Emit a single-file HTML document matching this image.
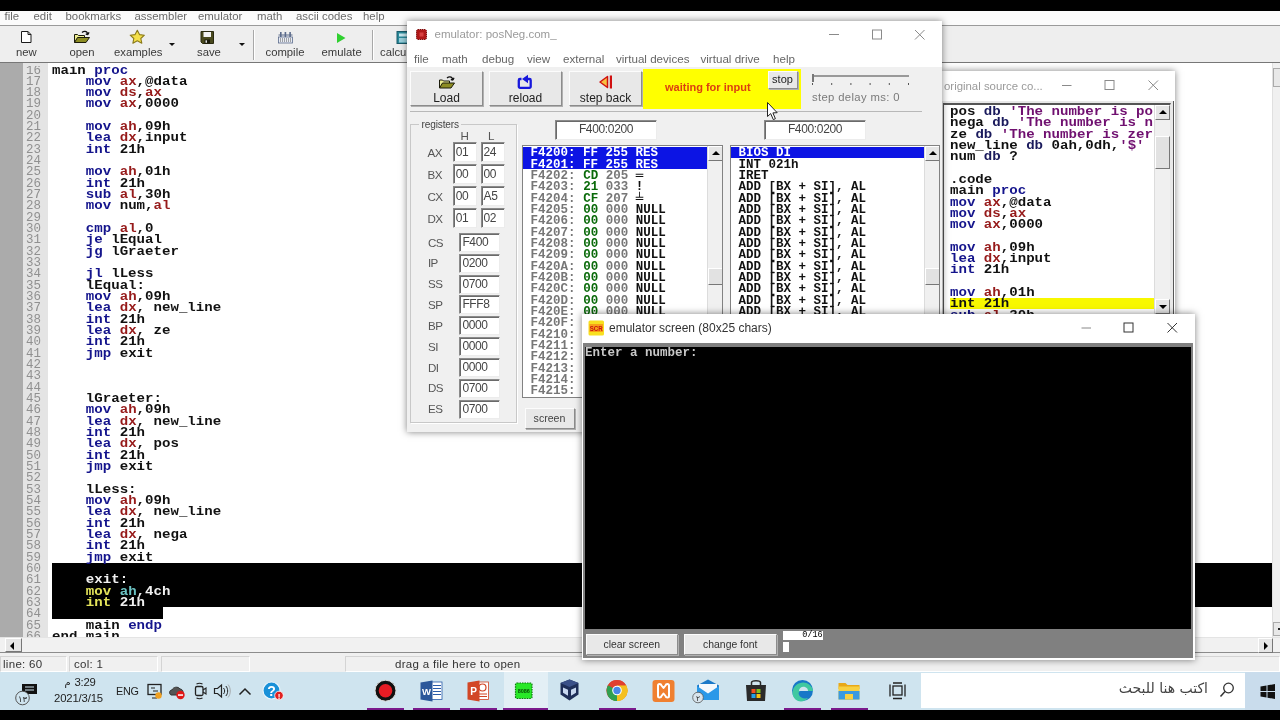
<!DOCTYPE html>
<html><head><meta charset="utf-8"><title>emu8086</title>
<style>
*{box-sizing:border-box;margin:0;padding:0}
html,body{width:1280px;height:720px;overflow:hidden;background:#fff}
body{position:relative;will-change:transform;font-family:"Liberation Sans","DejaVu Sans",sans-serif;font-size:12px;color:#222}
.abs{position:absolute}
svg{position:absolute;overflow:visible}
.mono{font-family:"Liberation Mono","DejaVu Sans Mono",monospace;font-weight:bold}
/* editor */
#menubar{left:0;top:10px;width:1280px;height:16px;background:#fbfbfb;border-bottom:1px solid #9a9a9a}
#menubar span{position:absolute;top:-1px;font-size:11.4px;color:#6a6a6a;line-height:14px;white-space:nowrap}
#toolbar{left:0;top:26px;width:1280px;height:37px;background:#eeeeee;border-bottom:1px solid #777}
.tbl{position:absolute;top:45px;font-size:11.3px;color:#3a3a3a;white-space:nowrap;line-height:14px}
.sep{position:absolute;top:30px;width:1px;height:30px;background:#a8a8a8;box-shadow:1px 0 0 #fff}
#gut1{left:0;top:63px;width:22.7px;height:574px;background:#ababab}
#gut2{left:22.7px;top:63px;width:25.3px;height:574px;background:#e4e4e4}
#ed{left:0;top:65.5px;width:1273px;height:571.5px;overflow:hidden}
.ln{height:11.33px;line-height:11.33px;white-space:pre;font-family:"Liberation Mono",monospace;font-weight:bold;font-size:12.1px;position:relative}
.ln .no{position:absolute;left:26.2px;top:0;color:#909090;font-weight:normal;transform:scaleX(1.03);transform-origin:0 50%}
.ln .tx{position:absolute;left:52px;top:0;color:#111;transform:scaleX(1.1653);transform-origin:0 50%}
.b{color:#14148c}.r{color:#961a1a}.p{color:#701070}.n{color:#1a1a5c}
.ln.sel .tx{color:#f0f0f0}
.ln.sel .b{color:#e4e45a}.ln.sel .r{color:#6cc4c4}
/* generic win controls */
.win{background:#fff;box-shadow:0 0 7px rgba(0,0,0,.5)}
.ttl{position:absolute;font-size:12px;color:#9a9a9a;white-space:nowrap}
.btn{position:absolute;background:#e8e8e8;border:1px solid #fcfcfc;border-right-color:#8c8c8c;border-bottom-color:#8c8c8c;box-shadow:1px 1px 0 #b0b0b0;text-align:center;color:#222;font-size:12px;white-space:nowrap}
.rl{position:absolute;font-size:11.6px;color:#555;line-height:14px;letter-spacing:-0.6px}
.rb{position:absolute;height:20px;letter-spacing:-0.35px;background:#fff;border:1px solid #8a8a8a;border-right-color:#ececec;border-bottom-color:#ececec;font-size:12px;line-height:17.5px;padding-left:2px;color:#444;box-shadow:inset 1px 1px 0 #6a6a6a}
.list{position:absolute;background:#fff;overflow:hidden;border:1px solid #828282}
.ml{height:11.33px;line-height:11.33px;white-space:pre;font-family:"Liberation Mono",monospace;font-weight:bold;font-size:12.5px;color:#111;padding-left:7.6px}
.ml i{font-style:normal;position:relative;top:1.6px}
.ml.hs{background:#0c14e4;color:#fff}
.ad{color:#777}.hx{color:#0a6a0a}
.sl{height:11.33px;line-height:11.33px;white-space:pre;font-family:"Liberation Mono",monospace;font-weight:bold;font-size:12.1px;color:#111;padding-left:6px}
.sl i{font-style:normal;display:inline-block;position:relative;top:1.9px;transform:scaleX(1.1653);transform-origin:0 50%}
.sl.yl{background:#f8f800;margin-left:5.5px;padding-left:0.5px}
.sb{position:absolute;background:#f0f0f0;border-left:1px solid #dcdcdc}
.sbb{position:absolute;left:0;width:15px;height:15px;background:#e6e6e6;border:1px solid #fff;border-right-color:#777;border-bottom-color:#777}
.sbt{position:absolute;left:0;width:15px;background:#e2e2e2;border:1px solid #fff;border-right-color:#777;border-bottom-color:#777}
.tri-u{position:absolute;left:3px;top:4px;width:0;height:0;border-left:4px solid transparent;border-right:4px solid transparent;border-bottom:4px solid #000}
.tri-d{position:absolute;left:3px;top:5px;width:0;height:0;border-left:4px solid transparent;border-right:4px solid transparent;border-top:4px solid #000}
.tri-l{position:absolute;left:4px;top:3px;width:0;height:0;border-top:4px solid transparent;border-bottom:4px solid transparent;border-right:4px solid #000}
.tri-r{position:absolute;left:5px;top:3px;width:0;height:0;border-top:4px solid transparent;border-bottom:4px solid transparent;border-left:4px solid #000}
.dd{position:absolute;width:0;height:0;border-left:3.5px solid transparent;border-right:3.5px solid transparent;border-top:3.5px solid #111}
.ul{position:absolute;top:707.5px;height:2px;background:#7a1a8c}
</style></head>
<body>
<!-- editor window -->
<div class="abs" id="menubar">
<span style="left:4.5px">file</span><span style="left:33.5px">edit</span><span style="left:65.5px">bookmarks</span><span style="left:134.5px">assembler</span><span style="left:198px">emulator</span><span style="left:257px">math</span><span style="left:296px">ascii codes</span><span style="left:363px">help</span>
</div>
<div class="abs" id="toolbar"></div>
<div class="tbl" style="left:16px">new</div>
<div class="tbl" style="left:69.5px">open</div>
<div class="tbl" style="left:114px">examples</div>
<div class="tbl" style="left:197px">save</div>
<div class="tbl" style="left:265.5px">compile</div>
<div class="tbl" style="left:321.5px">emulate</div>
<div class="tbl" style="left:380px">calculator</div>
<div class="sep" style="left:253px"></div><div class="sep" style="left:372px"></div>
<div class="dd" style="left:168.5px;top:43.3px"></div><div class="dd" style="left:238.5px;top:43.3px"></div>
<!-- toolbar icons -->
<svg style="left:0;top:0" width="420" height="64" viewBox="0 0 420 64">
<!-- new -->
<path d="M21.5,31.5h6.5l3,3v8h-9.5z" fill="#fff" stroke="#1a1a1a" stroke-width="1"/><path d="M28,31.500v3h3" fill="none" stroke="#1a1a1a" stroke-width="1"/>
<!-- open -->
<path d="M74.5,42.5v-8h3l1,1h6v2" fill="#ecec90" stroke="#1a1a0a" stroke-width="1"/><path d="M74.500,42.500l3,-5h12l-3.500,5z" fill="#8c8c22" stroke="#1a1a0a" stroke-width="1"/><path d="M82,32.500c2,-1.800 4.500,-1.300 5.500,0.500l0.500,1.500m0,0l-2.200,-0.500m2.200,0.500l1,-2.200" fill="none" stroke="#111" stroke-width="1.300"/>
<!-- star -->
<path d="M137.3,30.3l2.2,4.3 4.9,0.6 -3.6,3.3 1,4.7 -4.5,-2.4 -4.4,2.4 0.9,-4.7 -3.6,-3.3 4.9,-0.6z" fill="#f4e04a" stroke="#8a7a1a" stroke-width="1.1" stroke-linejoin="round"/>
<!-- save -->
<path d="M201,31.5h12.5v12h-11l-1.5,-1.5z" fill="#4a4a1e" stroke="#2a2a10" stroke-width="1"/><rect x="203.5" y="32" width="7.5" height="5" fill="#f4f4f4"/><rect x="204.5" y="39.5" width="5.5" height="4" fill="#1a1a0a"/><rect x="205.5" y="40.3" width="1.5" height="2.5" fill="#ddd"/>
<!-- compile -->
<g fill="#5a6a8a"><rect x="278.5" y="37" width="14" height="6" fill="#e8ecf4" stroke="#5a6a8a" stroke-width="0.8"/><rect x="280" y="32" width="1.6" height="5"/><rect x="284.6" y="32" width="1.6" height="5"/><rect x="289.3" y="32" width="1.6" height="5"/><rect x="278.5" y="34.5" width="14" height="1"/><g fill="#555"><rect x="280" y="38.5" width="1" height="1"/><rect x="282" y="38.5" width="1" height="1"/><rect x="284" y="38.5" width="1" height="1"/><rect x="286" y="38.5" width="1" height="1"/><rect x="288" y="38.5" width="1" height="1"/><rect x="290" y="38.5" width="1" height="1"/><rect x="280" y="40.5" width="1" height="1"/><rect x="282" y="40.5" width="1" height="1"/><rect x="284" y="40.5" width="1" height="1"/><rect x="286" y="40.5" width="1" height="1"/><rect x="288" y="40.5" width="1" height="1"/><rect x="290" y="40.5" width="1" height="1"/></g></g>
<!-- emulate -->
<path d="M337,33v10l8.5,-5z" fill="#30d030"/>
<!-- calc -->
<rect x="397" y="31.5" width="12" height="12" fill="#2a8a9a" stroke="#1a5a6a" stroke-width="1"/><rect x="399" y="33.5" width="9" height="3" fill="#c8e8f0"/><rect x="399" y="38" width="9" height="4.5" fill="#9ad0dc"/>
</svg>

<div class="abs" id="gut1"></div><div class="abs" id="gut2"></div>
<div class="abs" style="left:52px;top:562.8px;width:1221px;height:44.6px;background:#000"></div>
<div class="abs" style="left:52px;top:607px;width:111px;height:11.5px;background:#000"></div>
<div class="abs" id="ed">
<div class="ln"><span class="no">16</span><span class="tx">main <span class="b">proc</span></span></div>
<div class="ln"><span class="no">17</span><span class="tx">    <span class="b">mov</span> <span class="r">ax</span>,@data</span></div>
<div class="ln"><span class="no">18</span><span class="tx">    <span class="b">mov</span> <span class="r">ds</span>,<span class="r">ax</span></span></div>
<div class="ln"><span class="no">19</span><span class="tx">    <span class="b">mov</span> <span class="r">ax</span>,0000</span></div>
<div class="ln"><span class="no">20</span><span class="tx"></span></div>
<div class="ln"><span class="no">21</span><span class="tx">    <span class="b">mov</span> <span class="r">ah</span>,09h</span></div>
<div class="ln"><span class="no">22</span><span class="tx">    <span class="b">lea</span> <span class="r">dx</span>,input</span></div>
<div class="ln"><span class="no">23</span><span class="tx">    <span class="b">int</span> 21h</span></div>
<div class="ln"><span class="no">24</span><span class="tx"></span></div>
<div class="ln"><span class="no">25</span><span class="tx">    <span class="b">mov</span> <span class="r">ah</span>,01h</span></div>
<div class="ln"><span class="no">26</span><span class="tx">    <span class="b">int</span> 21h</span></div>
<div class="ln"><span class="no">27</span><span class="tx">    <span class="b">sub</span> <span class="r">al</span>,30h</span></div>
<div class="ln"><span class="no">28</span><span class="tx">    <span class="b">mov</span> num,<span class="r">al</span></span></div>
<div class="ln"><span class="no">29</span><span class="tx"></span></div>
<div class="ln"><span class="no">30</span><span class="tx">    <span class="b">cmp</span> <span class="r">al</span>,0</span></div>
<div class="ln"><span class="no">31</span><span class="tx">    <span class="b">je</span> lEqual</span></div>
<div class="ln"><span class="no">32</span><span class="tx">    <span class="b">jg</span> lGraeter</span></div>
<div class="ln"><span class="no">33</span><span class="tx"></span></div>
<div class="ln"><span class="no">34</span><span class="tx">    <span class="b">jl</span> lLess</span></div>
<div class="ln"><span class="no">35</span><span class="tx">    lEqual:</span></div>
<div class="ln"><span class="no">36</span><span class="tx">    <span class="b">mov</span> <span class="r">ah</span>,09h</span></div>
<div class="ln"><span class="no">37</span><span class="tx">    <span class="b">lea</span> <span class="r">dx</span>, new_line</span></div>
<div class="ln"><span class="no">38</span><span class="tx">    <span class="b">int</span> 21h</span></div>
<div class="ln"><span class="no">39</span><span class="tx">    <span class="b">lea</span> <span class="r">dx</span>, ze</span></div>
<div class="ln"><span class="no">40</span><span class="tx">    <span class="b">int</span> 21h</span></div>
<div class="ln"><span class="no">41</span><span class="tx">    <span class="b">jmp</span> exit</span></div>
<div class="ln"><span class="no">42</span><span class="tx"></span></div>
<div class="ln"><span class="no">43</span><span class="tx"></span></div>
<div class="ln"><span class="no">44</span><span class="tx"></span></div>
<div class="ln"><span class="no">45</span><span class="tx">    lGraeter:</span></div>
<div class="ln"><span class="no">46</span><span class="tx">    <span class="b">mov</span> <span class="r">ah</span>,09h</span></div>
<div class="ln"><span class="no">47</span><span class="tx">    <span class="b">lea</span> <span class="r">dx</span>, new_line</span></div>
<div class="ln"><span class="no">48</span><span class="tx">    <span class="b">int</span> 21h</span></div>
<div class="ln"><span class="no">49</span><span class="tx">    <span class="b">lea</span> <span class="r">dx</span>, pos</span></div>
<div class="ln"><span class="no">50</span><span class="tx">    <span class="b">int</span> 21h</span></div>
<div class="ln"><span class="no">51</span><span class="tx">    <span class="b">jmp</span> exit</span></div>
<div class="ln"><span class="no">52</span><span class="tx"></span></div>
<div class="ln"><span class="no">53</span><span class="tx">    lLess:</span></div>
<div class="ln"><span class="no">54</span><span class="tx">    <span class="b">mov</span> <span class="r">ah</span>,09h</span></div>
<div class="ln"><span class="no">55</span><span class="tx">    <span class="b">lea</span> <span class="r">dx</span>, new_line</span></div>
<div class="ln"><span class="no">56</span><span class="tx">    <span class="b">int</span> 21h</span></div>
<div class="ln"><span class="no">57</span><span class="tx">    <span class="b">lea</span> <span class="r">dx</span>, nega</span></div>
<div class="ln"><span class="no">58</span><span class="tx">    <span class="b">int</span> 21h</span></div>
<div class="ln"><span class="no">59</span><span class="tx">    <span class="b">jmp</span> exit</span></div>
<div class="ln sel"><span class="no">60</span><span class="tx"></span></div>
<div class="ln sel"><span class="no">61</span><span class="tx">    exit:</span></div>
<div class="ln sel"><span class="no">62</span><span class="tx">    <span class="b">mov</span> <span class="r">ah</span>,4ch</span></div>
<div class="ln sel"><span class="no">63</span><span class="tx">    <span class="b">int</span> 21h</span></div>
<div class="ln sel"><span class="no">64</span><span class="tx"></span></div>
<div class="ln"><span class="no">65</span><span class="tx">    main <span class="b">endp</span></span></div>
<div class="ln"><span class="no">66</span><span class="tx">end main</span></div>
</div>
<!-- editor v scrollbar -->
<div class="abs" style="left:1272px;top:63px;width:8px;height:574px;background:#f0f0f0;border-left:1px solid #e0e0e0"></div>
<div class="abs" style="left:1273px;top:68px;width:9px;height:19px;background:#e8e8e8;border:1px solid #aaa"></div>
<!-- editor h scrollbar -->
<div class="abs" style="left:0;top:637px;width:1280px;height:16px;background:#f1f1f1;border-top:1px solid #e4e4e4;border-bottom:1px solid #8c8c8c"></div>
<div class="sbb" style="left:5px;top:638px;width:17px;height:14px;position:absolute"><div class="tri-l"></div></div>
<div class="sbb" style="left:1257.5px;top:638px;width:15px;height:14.5px;position:absolute"><div class="tri-r" style="left:5px"></div></div>
<div class="abs" style="left:1273px;top:622px;width:9px;height:14px;background:#e8e8e8;border:1px solid #aaa"></div><div class="abs" style="left:1278px;top:628px;width:2px;height:2px;background:#222"></div>
<!-- status bar -->
<div class="abs" style="left:0;top:653px;width:1280px;height:19px;background:#f0f0f0"></div>
<div class="abs" style="left:0;top:656px;width:67px;height:16px;border:1px solid #d4d4d4;border-right-color:#fff;border-bottom-color:#fff"></div>
<div class="abs" style="left:69px;top:656px;width:89px;height:16px;border:1px solid #d4d4d4;border-right-color:#fff;border-bottom-color:#fff"></div>
<div class="abs" style="left:161px;top:656px;width:89px;height:16px;border:1px solid #d4d4d4;border-right-color:#fff;border-bottom-color:#fff"></div>
<div class="abs" style="left:345px;top:656px;width:935px;height:16px;border:1px solid #d4d4d4;border-right-color:#fff;border-bottom-color:#fff"></div>
<div class="abs" style="left:3px;top:658.3px;font-size:11.5px;color:#333;letter-spacing:0.3px;white-space:nowrap">line: 60</div>
<div class="abs" style="left:74px;top:658.3px;font-size:11.5px;color:#333;letter-spacing:0.3px;white-space:nowrap">col: 1</div>
<div class="abs" style="left:395px;top:658.3px;font-size:11.5px;color:#333;letter-spacing:0.3px;white-space:nowrap">drag a file here to open</div>
<!-- taskbar -->
<div class="abs" style="left:0;top:672px;width:1280px;height:38px;background:#cfe4ef"></div>
<!-- taskbar content -->
<div class="abs" style="left:503.5px;top:672px;width:44px;height:38px;background:#e3eff5"></div>
<div class="abs" style="left:921px;top:672.5px;width:324px;height:35.5px;background:#fff"></div>
<div class="abs" style="left:1245px;top:672px;width:35px;height:38px;background:#c9dcec"></div>
<div class="ul" style="left:367px;width:37px"></div><div class="ul" style="left:413px;width:37px"></div><div class="ul" style="left:459.5px;width:37.5px"></div><div class="ul" style="left:502.5px;width:45px"></div><div class="ul" style="left:598.7px;width:37.5px"></div><div class="ul" style="left:784px;width:37px"></div><div class="ul" style="left:831px;width:37px"></div>
<div class="abs" style="left:64.5px;top:676.5px;font-size:10px;color:#222;font-family:'DejaVu Sans',sans-serif">م</div><div class="abs" style="left:74.5px;top:676px;font-size:11.3px;color:#222;white-space:nowrap;letter-spacing:-0.2px">3:29</div>
<div class="abs" style="left:54px;top:692px;font-size:11.3px;color:#222;white-space:nowrap;letter-spacing:-0.15px">2021/3/15</div>
<div class="abs" style="left:116px;top:684.5px;font-size:10.8px;color:#222;white-space:nowrap;letter-spacing:-0.3px">ENG</div>
<div class="abs" style="left:1000px;top:680px;width:208px;text-align:right;font-size:14px;color:#444;white-space:nowrap;font-family:'DejaVu Sans',sans-serif;direction:rtl">اكتب هنا للبحث</div>
<svg style="left:0;top:672px" width="1280" height="38" viewBox="0 672 1280 38">
<!-- notification -->
<path d="M22,684h15v10h-9l-3,3v-3h-3z" fill="#111"/><path d="M25,687h9M25,690h9" stroke="#cfe4ef" stroke-width="1"/>
<circle cx="22.500" cy="698" r="6.800" fill="#cfe4ef" stroke="#555" stroke-width="1"/>
<text x="22.500" y="701.500" font-family="DejaVu Sans,sans-serif" font-size="8.500" fill="#222" text-anchor="middle">١٣</text>
<!-- tray icons -->
<rect x="148" y="684.500" width="13" height="10" fill="none" stroke="#222" stroke-width="1.300"/><path d="M152,698h5M151,688h4M153,691h5" stroke="#222" stroke-width="1.200"/><circle cx="158.500" cy="695.500" r="3.200" fill="#f0a020"/>
<path d="M171,695c-2,-1 -2,-5 1,-5c1,-3 6,-4 8,-1c3,0 4,4 2,6z" fill="#555" stroke="#333" stroke-width="1"/><circle cx="180.500" cy="695" r="4.200" fill="#e01818"/><rect x="178" y="694.300" width="5" height="1.500" fill="#fff"/>
<rect x="195.500" y="686.500" width="7.500" height="9" rx="1.500" fill="none" stroke="#222" stroke-width="1.300"/><path d="M203,690l3,-2v6l-3,-2M196.500,684c2,-1 4,-1 6,0M196.500,698c2,1 4,1 6,0" fill="none" stroke="#222" stroke-width="1.100"/>
<path d="M214.500,688.500h3l4,-3.500v12l-4,-3.500h-3z" fill="none" stroke="#222" stroke-width="1.200"/><path d="M223.500,688c1.500,1.500 1.500,4.500 0,6M225.800,686c2.500,2.500 2.500,7.500 0,10" fill="none" stroke="#222" stroke-width="1"/><path d="M228,684.500c3,3.500 3,9.500 0,13" fill="none" stroke="#999" stroke-width="0.800"/>
<path d="M239.500,694.500l5.500,-5.500 5.500,5.500" fill="none" stroke="#222" stroke-width="1.500"/>
<circle cx="271.500" cy="690.500" r="8.500" fill="#1890d8" stroke="#e8f4fc" stroke-width="1.200"/><text x="271.500" y="695.500" font-family="Liberation Sans,sans-serif" font-weight="bold" font-size="14" fill="#fff" text-anchor="middle">?</text><circle cx="279" cy="695.500" r="4.300" fill="#e02020" stroke="#fff" stroke-width="0.800"/><text x="279" y="698.500" font-family="Liberation Sans,sans-serif" font-weight="bold" font-size="8" fill="#fff" text-anchor="middle">!</text>
<!-- record -->
<circle cx="385.500" cy="690.700" r="10.500" fill="#111" stroke="#ddd" stroke-width="1"/><circle cx="385.500" cy="690.700" r="6.800" fill="#e81c24"/>
<!-- word -->
<rect x="429" y="682" width="13" height="17.500" fill="#fff" stroke="#2a5caa" stroke-width="0.800"/><path d="M433,685.500h8M433,688.500h8M433,691.500h8M433,694.500h8" stroke="#2a5caa" stroke-width="1"/><path d="M420.500,682.500l12,-2v21l-12,-2z" fill="#2b579a"/><text x="426.500" y="695" font-family="Liberation Sans,sans-serif" font-weight="bold" font-size="9.500" fill="#fff" text-anchor="middle">W</text>
<!-- powerpoint -->
<rect x="476" y="682" width="12.500" height="17.500" fill="#fff" stroke="#d04424" stroke-width="0.800"/><circle cx="482.500" cy="687.500" r="3.500" fill="none" stroke="#d04424" stroke-width="1.200"/><path d="M479,694h8M479,696.500h8" stroke="#d04424" stroke-width="1"/><path d="M467.500,682.500l12,-2v21l-12,-2z" fill="#d24726"/><text x="473.500" y="695" font-family="Liberation Sans,sans-serif" font-weight="bold" font-size="10" fill="#fff" text-anchor="middle">P</text>
<!-- emu8086 chip -->
<rect x="515.500" y="683" width="16.500" height="15.500" rx="1.500" fill="#28e828" stroke="#0a7a0a" stroke-width="1.200" stroke-dasharray="1.500 1"/><text x="523.800" y="693.300" font-family="Liberation Sans,sans-serif" font-weight="bold" font-size="5.500" fill="#064a06" text-anchor="middle">8086</text>
<!-- virtualbox -->
<path d="M569.500,679.500l9,3.500v11.500l-9,6 -9,-6v-11.500z" fill="#1e2e58"/><path d="M569.500,679.500l9,3.500 -9,4 -9,-4z" fill="#3a5088"/><path d="M563,687.500l5,2.200v6l-5,-3zM576,687.500l-5,2.200v6l5,-3z" fill="#c8d8f0"/>
<!-- chrome -->
<circle cx="617" cy="690.500" r="10.500" fill="#e04030"/><path d="M617,690.500L607.900,685.250A10.500,10.500 0 0 0 611.750,699.600z" fill="#e04030"/><path d="M617,690.500L611.750,699.600A10.500,10.500 0 0 0 626.100,685.250z" fill="#f4c020" /><path d="M617,690.500l-9.100,5.250A10.500,10.500 0 0 0 617,701z" fill="#30a050"/><path d="M608,685.300A10.500,10.500 0 0 0 617,701L621.500,693z" fill="#30a050"/><path d="M617,701A10.500,10.500 0 0 0 626.100,685.250H617z" fill="#f4c020"/><path d="M607.900,685.250A10.500,10.500 0 0 1 626.100,685.250z" fill="#e04030"/><circle cx="617" cy="690.500" r="4.800" fill="#fff"/><circle cx="617" cy="690.500" r="3.700" fill="#4a88e8"/>
<!-- xampp -->
<rect x="652.500" y="680" width="22" height="22" rx="3" fill="#f08030"/><path d="M658,685.500c0,-2 3,-2 3.500,0l2,2.500 2,-2.500c0.500,-2 3.500,-2 3.500,0v10.500c0,2 -3,2 -3.500,0l-2,-2.500 -2,2.500c-0.500,2 -3.500,2 -3.500,0z" fill="none" stroke="#fff" stroke-width="2" stroke-linejoin="round"/>
<!-- mail -->
<path d="M697,685.500l11,-6 11,6v14h-22z" fill="#1a78c8"/><path d="M699,684h18v8l-9,5 -9,-5z" fill="#f4f8fc"/><path d="M697,686l11,7.500 11,-7.500v14h-22z" fill="#2a98e8"/><circle cx="698" cy="697.500" r="5.300" fill="#d8e4ec" stroke="#555" stroke-width="0.800"/><text x="698" y="700.500" font-family="DejaVu Sans,sans-serif" font-size="7.500" fill="#222" text-anchor="middle">٢</text>
<!-- store -->
<path d="M746,685h20l-1,16h-18z" fill="#2a2a2a"/><path d="M751.500,685v-2.500c0,-2.500 9,-2.500 9,0v2.500" fill="none" stroke="#2a2a2a" stroke-width="1.500"/><rect x="751.500" y="689" width="4" height="4" fill="#f05020"/><rect x="756.500" y="689" width="4" height="4" fill="#80c020"/><rect x="751.500" y="694" width="4" height="4" fill="#20a0e8"/><rect x="756.500" y="694" width="4" height="4" fill="#f8c010"/>
<!-- edge -->
<circle cx="802.500" cy="690.500" r="10.500" fill="#1878c8"/><path d="M792.500,693c0,-8 8,-12 14,-10c4,1.500 6.500,5 6.500,8h-12c-2,0 -3,2 -2,4c1.500,3 5,4 9,3c-3,4 -9,4.500 -12.500,1.500c-2,-2 -3,-4 -3,-6.500z" fill="#40c8a0"/><path d="M799,691c0,-3 3,-5 6,-4c2,0.700 3,2 3,4z" fill="#cfe4ef"/>
<!-- explorer -->
<path d="M838.500,683h7l2,2h12v4h-21z" fill="#e8a818"/><rect x="838.500" y="686.500" width="21" height="13" fill="#f8d040"/><rect x="838.500" y="691" width="21" height="8.500" fill="#3a9ae0"/><rect x="845" y="694" width="8" height="5.500" fill="#f8d040"/>
<!-- task view -->
<g fill="none" stroke="#222" stroke-width="1.300"><rect x="893" y="686" width="9" height="9"/><path d="M890,684.500v12M905,684.500v12M893,683h9M893,698.500h9"/></g>
<!-- search icon -->
<circle cx="1228.500" cy="688" r="4.800" fill="none" stroke="#333" stroke-width="1.300"/><path d="M1225,691.500l-4.500,5" stroke="#333" stroke-width="1.500"/>
<!-- windows logo -->
<g fill="#111"><path d="M1260.500,686.500l6,-1v5.500h-6z"/><path d="M1267.500,685.300l7.500,-1.200v6.900h-7.500z"/><path d="M1260.500,692h6v5.500l-6,-1z"/><path d="M1267.500,692h7.500v6.900l-7.500,-1.200z"/></g>
</svg>


<!-- source window -->
<div class="abs win" style="left:940px;top:71px;width:235px;height:260px"></div>
<div class="ttl" style="left:944px;top:79.5px;font-size:11.4px">original source co...</div>
<div class="abs" style="left:942px;top:101px;width:232px;height:215px;background:#e8e8e8"></div>
<div class="abs" style="left:1172.5px;top:101px;width:1.5px;height:214px;background:#555"></div>
<div class="list" style="left:943px;top:103px;width:228px;height:212px;border-color:#555;border-right-color:#e8e8e8;border-width:2px 1px 1px 1px">
<div class="sl"><i>pos <span class="n">db</span> <span class="p">'The number is po</span></i></div>
<div class="sl"><i>nega <span class="n">db</span> <span class="p">'The number is n</span></i></div>
<div class="sl"><i>ze <span class="n">db</span> <span class="p">'The number is zer</span></i></div>
<div class="sl"><i>new_line <span class="n">db</span> 0ah,0dh,<span class="p">'$'</span></i></div>
<div class="sl"><i>num <span class="n">db</span> ?</i></div>
<div class="sl"><i> </i></div>
<div class="sl"><i>.code</i></div>
<div class="sl"><i>main <span class="b">proc</span></i></div>
<div class="sl"><i><span class="b">mov</span> <span class="r">ax</span>,@data</i></div>
<div class="sl"><i><span class="b">mov</span> <span class="r">ds</span>,<span class="r">ax</span></i></div>
<div class="sl"><i><span class="b">mov</span> <span class="r">ax</span>,0000</i></div>
<div class="sl"><i> </i></div>
<div class="sl"><i><span class="b">mov</span> <span class="r">ah</span>,09h</i></div>
<div class="sl"><i><span class="b">lea</span> <span class="r">dx</span>,input</i></div>
<div class="sl"><i><span class="b">int</span> 21h</i></div>
<div class="sl"><i> </i></div>
<div class="sl"><i><span class="b">mov</span> <span class="r">ah</span>,01h</i></div>
<div class="sl yl"><i>int 21h</i></div>
<div class="sl"><i><span class="b">sub</span> <span class="r">al</span>,30h</i></div>
<div class="sb" style="left:210px;top:0;width:16px;height:212px"><div class="sbb" style="top:0"><div class="tri-u"></div></div><div class="sbt" style="top:31px;height:33px"></div><div class="sbb" style="top:193.5px"><div class="tri-d"></div></div></div>
</div>

<!-- emulator window -->
<div class="abs win" id="emu" style="left:407px;top:20.5px;width:535px;height:411.5px;background:#f0f0f0">
<div class="abs" style="left:0;top:0;width:535px;height:46px;background:#fff"></div>
</div>
<div class="ttl" style="left:434.5px;top:28.3px;font-size:11.5px">emulator: posNeg.com_</div>
<div class="abs" style="top:52px;left:0;font-size:11.6px;color:#666">
<span class="abs" style="left:414px">file</span><span class="abs" style="left:442px">math</span><span class="abs" style="left:482px">debug</span><span class="abs" style="left:527px">view</span><span class="abs" style="left:563px">external</span><span class="abs" style="left:616px;white-space:nowrap">virtual devices</span><span class="abs" style="left:700.5px;white-space:nowrap">virtual drive</span><span class="abs" style="left:773px">help</span>
</div>
<div class="btn" style="left:410px;top:71px;width:73px;height:35px;padding-top:19px;line-height:14px">Load</div>
<div class="btn" style="left:489px;top:71px;width:73px;height:35px;padding-top:19px;line-height:14px">reload</div>
<div class="btn" style="left:569px;top:71px;width:73px;height:35px;padding-top:19px;line-height:14px">step back</div>
<div class="abs" style="left:642.5px;top:68.7px;width:158.5px;height:40px;background:#ffff00"></div>
<div class="abs" style="left:665px;top:81px;font-size:11px;font-weight:bold;color:#dc4010;white-space:nowrap">waiting for input</div>
<div class="btn" style="left:767.5px;top:71px;width:30px;height:17.5px;font-size:11px;line-height:14px">stop</div>
<div class="abs" style="left:812px;top:75px;width:97px;height:1.5px;background:#999"></div>
<div class="abs" style="left:812px;top:74px;width:2px;height:8px;background:#777"></div>
<div class="abs" style="left:812px;top:83px;width:1px;height:2px;background:#555;box-shadow:19.2px 0 0 #555,38.400px 0 0 #555,57.600px 0 0 #555,76.800px 0 0 #555,96px 0 0 #555"></div>
<div class="abs" style="left:812px;top:91px;font-size:11.3px;color:#7a7a7a;white-space:nowrap;letter-spacing:0.35px">step delay ms: 0</div>
<div class="abs" style="left:410px;top:111px;width:512px;height:1px;background:#b8b8b8"></div>
<!-- registers -->
<div class="abs" style="left:410.2px;top:124px;width:107px;height:299.3px;border:1px solid #c8c8c8;box-shadow:1px 1px 0 #fff"></div>
<div class="abs" style="left:419px;top:117.5px;font-size:10.1px;color:#444;background:#f0f0f0;padding:0 2.5px;line-height:14px;letter-spacing:-0.15px">registers</div>
<div class="rl" style="left:460.5px;top:128.5px">H</div><div class="rl" style="left:488px;top:128.5px">L</div>
<div class="rl" style="left:427.5px;top:146.2px">AX</div><div class="rb" style="left:452.8px;top:142.2px;width:24.5px;line-height:19.5px">01</div><div class="rb" style="left:480.5px;top:142.2px;width:24.5px;line-height:19.5px">24</div>
<div class="rl" style="left:427.5px;top:168.2px">BX</div><div class="rb" style="left:452.8px;top:164.2px;width:24.5px;line-height:19.5px">00</div><div class="rb" style="left:480.5px;top:164.2px;width:24.5px;line-height:19.5px">00</div>
<div class="rl" style="left:427.5px;top:190.2px">CX</div><div class="rb" style="left:452.8px;top:186.2px;width:24.5px;line-height:19.5px">00</div><div class="rb" style="left:480.5px;top:186.2px;width:24.5px;line-height:19.5px">A5</div>
<div class="rl" style="left:427.5px;top:212.2px">DX</div><div class="rb" style="left:452.8px;top:208.2px;width:24.5px;line-height:19.5px">01</div><div class="rb" style="left:480.5px;top:208.2px;width:24.5px;line-height:19.5px">02</div>
<div class="rl" style="left:428px;top:235.5px">CS</div><div class="rb" style="left:459.4px;top:232.8px;width:41px;height:19px">F400</div>
<div class="rl" style="left:428px;top:256.4px">IP</div><div class="rb" style="left:459.4px;top:253.7px;width:41px;height:19px">0200</div>
<div class="rl" style="left:428px;top:277.2px">SS</div><div class="rb" style="left:459.4px;top:274.5px;width:41px;height:19px">0700</div>
<div class="rl" style="left:428px;top:298.1px">SP</div><div class="rb" style="left:459.4px;top:295.4px;width:41px;height:19px">FFF8</div>
<div class="rl" style="left:428px;top:318.9px">BP</div><div class="rb" style="left:459.4px;top:316.2px;width:41px;height:19px">0000</div>
<div class="rl" style="left:428px;top:339.8px">SI</div><div class="rb" style="left:459.4px;top:337.1px;width:41px;height:19px">0000</div>
<div class="rl" style="left:428px;top:360.6px">DI</div><div class="rb" style="left:459.4px;top:357.9px;width:41px;height:19px">0000</div>
<div class="rl" style="left:428px;top:381.4px">DS</div><div class="rb" style="left:459.4px;top:378.8px;width:41px;height:19px">0700</div>
<div class="rl" style="left:428px;top:402.3px">ES</div><div class="rb" style="left:459.4px;top:399.6px;width:41px;height:19px">0700</div>
<div class="rb" style="left:555px;top:120px;width:102px;text-align:center;padding:0;line-height:17px">F400:0200</div>
<div class="rb" style="left:764px;top:120px;width:102px;text-align:center;padding:0;line-height:17px">F400:0200</div>
<div class="list" style="left:522px;top:144.5px;width:201px;height:253.5px;padding-top:1.2px">
<div class="ml hs"><i>F4200: FF 255 RES</i></div>
<div class="ml hs"><i>F4201: FF 255 RES</i></div>
<div class="ml"><i><span class="ad">F4202:</span> <span class="hx">CD</span> <span class="ad">205</span> ═</i></div>
<div class="ml"><i><span class="ad">F4203:</span> <span class="hx">21</span> <span class="ad">033</span> !</i></div>
<div class="ml"><i><span class="ad">F4204:</span> <span class="hx">CF</span> <span class="ad">207</span> ╧</i></div>
<div class="ml"><i><span class="ad">F4205:</span> <span class="hx">00</span> <span class="ad">000</span> NULL</i></div>
<div class="ml"><i><span class="ad">F4206:</span> <span class="hx">00</span> <span class="ad">000</span> NULL</i></div>
<div class="ml"><i><span class="ad">F4207:</span> <span class="hx">00</span> <span class="ad">000</span> NULL</i></div>
<div class="ml"><i><span class="ad">F4208:</span> <span class="hx">00</span> <span class="ad">000</span> NULL</i></div>
<div class="ml"><i><span class="ad">F4209:</span> <span class="hx">00</span> <span class="ad">000</span> NULL</i></div>
<div class="ml"><i><span class="ad">F420A:</span> <span class="hx">00</span> <span class="ad">000</span> NULL</i></div>
<div class="ml"><i><span class="ad">F420B:</span> <span class="hx">00</span> <span class="ad">000</span> NULL</i></div>
<div class="ml"><i><span class="ad">F420C:</span> <span class="hx">00</span> <span class="ad">000</span> NULL</i></div>
<div class="ml"><i><span class="ad">F420D:</span> <span class="hx">00</span> <span class="ad">000</span> NULL</i></div>
<div class="ml"><i><span class="ad">F420E:</span> <span class="hx">00</span> <span class="ad">000</span> NULL</i></div>
<div class="ml"><i><span class="ad">F420F:</span> <span class="hx">00</span> <span class="ad">000</span> NULL</i></div>
<div class="ml"><i><span class="ad">F4210:</span> <span class="hx">00</span> <span class="ad">000</span> NULL</i></div>
<div class="ml"><i><span class="ad">F4211:</span> <span class="hx">00</span> <span class="ad">000</span> NULL</i></div>
<div class="ml"><i><span class="ad">F4212:</span> <span class="hx">00</span> <span class="ad">000</span> NULL</i></div>
<div class="ml"><i><span class="ad">F4213:</span> <span class="hx">00</span> <span class="ad">000</span> NULL</i></div>
<div class="ml"><i><span class="ad">F4214:</span> <span class="hx">00</span> <span class="ad">000</span> NULL</i></div>
<div class="ml"><i><span class="ad">F4215:</span> <span class="hx">00</span> <span class="ad">000</span> NULL</i></div>
<div class="sb" style="left:184px;top:0;width:16px;height:285px"><div class="sbb" style="top:0"><div class="tri-u"></div></div><div class="sbt" style="top:122px;height:17px"></div></div>
</div>
<div class="list" style="left:730px;top:144.5px;width:210px;height:285px;padding-top:1.2px">
<div class="ml hs"><i>BIOS DI</i></div>
<div class="ml"><i>INT 021h</i></div>
<div class="ml"><i>IRET</i></div>
<div class="ml"><i>ADD [BX + SI], AL</i></div>
<div class="ml"><i>ADD [BX + SI], AL</i></div>
<div class="ml"><i>ADD [BX + SI], AL</i></div>
<div class="ml"><i>ADD [BX + SI], AL</i></div>
<div class="ml"><i>ADD [BX + SI], AL</i></div>
<div class="ml"><i>ADD [BX + SI], AL</i></div>
<div class="ml"><i>ADD [BX + SI], AL</i></div>
<div class="ml"><i>ADD [BX + SI], AL</i></div>
<div class="ml"><i>ADD [BX + SI], AL</i></div>
<div class="ml"><i>ADD [BX + SI], AL</i></div>
<div class="ml"><i>ADD [BX + SI], AL</i></div>
<div class="ml"><i>ADD [BX + SI], AL</i></div>
<div class="ml"><i>ADD [BX + SI], AL</i></div>
<div class="ml"><i>ADD [BX + SI], AL</i></div>
<div class="sb" style="left:193px;top:0;width:16px;height:285px"><div class="sbb" style="top:0"><div class="tri-u"></div></div><div class="sbt" style="top:122px;height:17px"></div></div>
</div>
<div class="btn" style="left:524.5px;top:408px;width:50px;height:21px;line-height:18px;font-size:10.6px;color:#444">screen</div>
<!-- mouse cursor -->
<svg style="left:767px;top:102px" width="12" height="19" viewBox="0 0 12 19"><path d="M0.5,0.5 L0.5,14.5 L3.7,11.6 L6.3,17.6 L8.4,16.7 L5.9,10.9 L10.2,10.7 Z" fill="#fff" stroke="#222" stroke-width="1"/></svg>

<!-- emulator screen window -->
<div class="abs win" style="left:581.5px;top:314px;width:613px;height:345.5px;background:#fff"></div>
<div class="ttl" style="left:609px;top:321px;color:#333;font-size:12px">emulator screen (80x25 chars)</div>
<div class="abs" style="left:583px;top:343px;width:610px;height:315px;background:#808080"></div>
<div class="abs" style="left:584.5px;top:346.5px;width:606.5px;height:282px;background:#000"></div>
<div class="abs mono" style="left:585px;top:347.6px;font-size:12.5px;color:#c8c8c8;line-height:11.33px;white-space:pre">Enter a number:</div>
<div class="btn" style="left:585.5px;top:633.5px;width:92.5px;height:21px;line-height:19px;font-size:10.4px;color:#333">clear screen</div>
<div class="btn" style="left:684px;top:633.5px;width:92.5px;height:21px;line-height:19px;font-size:10.4px;color:#333">change font</div>
<div class="abs" style="left:782.7px;top:631.4px;width:40px;height:8.6px;background:#fff;font-size:8.5px;line-height:8.6px;text-align:right;font-family:'Liberation Mono',monospace;color:#000">0/16</div>
<div class="abs" style="left:782.7px;top:642px;width:6px;height:9.5px;background:#fff"></div>
<!-- window controls -->
<svg style="left:0;top:0" width="1280" height="720" viewBox="0 0 1280 720" fill="none" stroke="#8a8a8a" stroke-width="1">
<g><path d="M829,34.5h10"/><rect x="872.5" y="30" width="9" height="9"/><path d="M915,30l9.5,9.5M924.5,30l-9.5,9.5"/></g>
<g><path d="M1062,85.5h9.5"/><rect x="1105" y="80.5" width="9" height="9"/><path d="M1148.5,80.5l9.5,9.5M1158,80.5l-9.5,9.5"/></g>
<g stroke="#333"><path d="M1081.500,328h9.500" stroke="#888"/><rect x="1124" y="323" width="9" height="9"/><path d="M1167.500,323l9.500,9.500M1177,323l-9.500,9.500"/></g>
</svg>
<!-- emulator window icons -->
<svg style="left:400px;top:20px" width="260" height="100" viewBox="400 20 260 100">
<!-- chip icon -->
<rect x="416.5" y="29.5" width="10" height="10" rx="1.5" fill="#b01818" stroke="#7a0c0c" stroke-width="1" stroke-dasharray="1.2 0.8"/><rect x="419.5" y="32.5" width="4" height="4" fill="#d84040"/>
<!-- load folder -->
<path d="M439.500,88v-8h3l1,1h6v2" fill="#ecec90" stroke="#1a1a0a" stroke-width="1"/><path d="M439.500,88l3,-5h12l-3.500,5z" fill="#8c8c22" stroke="#1a1a0a" stroke-width="1"/><path d="M447,78c2,-1.800 4.500,-1.300 5.500,0.500l0.500,1.500m0,0l-2.200,-0.500m2.200,0.500l1,-2.200" fill="none" stroke="#111" stroke-width="1.300"/>
<!-- reload -->
<path d="M527.5,79h2a1.2,1.2 0 0 1 1.2,1.2v6.400a1.200,1.200 0 0 1 -1.200,1.200h-9.500a1.200,1.200 0 0 1 -1.200,-1.200v-6.400a1.200,1.200 0 0 1 1.200,-1.200h1.500" fill="none" stroke="#1818dc" stroke-width="2.300"/><path d="M528,74.700v8.600l-6,-4.300z" fill="#1818dc"/>
<!-- step back -->
<path d="M607.500,76.500l-7.500,5.500 7.500,5.500z" fill="#f8c040" stroke="#d01010" stroke-width="1.500" stroke-linejoin="round"/><rect x="609.800" y="75.500" width="2.200" height="13" fill="#d01010"/>
</svg>
<!-- screen window icon -->
<svg style="left:588px;top:320px" width="17" height="16" viewBox="0 0 17 16"><rect x="0.5" y="0.5" width="15.500" height="15" rx="1.5" fill="#f8e020"/><rect x="1.5" y="4" width="13.500" height="8" fill="#f8a018"/><text x="8.200" y="11.300" font-family="Liberation Sans,sans-serif" font-weight="bold" font-size="7.500" fill="#c81010" text-anchor="middle" textLength="13" lengthAdjust="spacingAndGlyphs">SCR</text></svg>


<!-- black bars -->
<div class="abs" style="left:0;top:0;width:1280px;height:10.5px;background:#000"></div>
<div class="abs" style="left:0;top:709.5px;width:1280px;height:10.5px;background:#000"></div>
</body></html>
